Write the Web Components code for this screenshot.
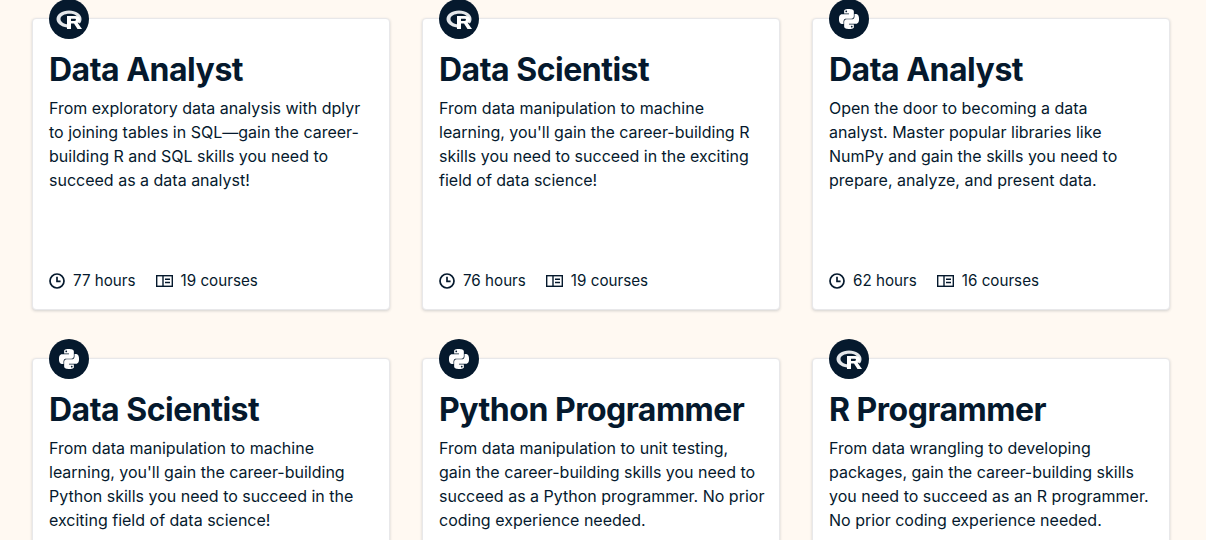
<!DOCTYPE html>
<html lang="en">
<head>
<meta charset="utf-8">
<title>Career tracks</title>
<style>
  html, body {
    margin: 0;
    height: 100%;
    overflow: hidden;
    background-color: #fff;
  }
</style>
</head>
<body>
<track-grid>
  <track-card tech="r" hours="77 hours" courses="19 courses" heading="Data Analyst">From exploratory data analysis with dplyr<br>to joining tables in SQL—gain the career-<br>building R and SQL skills you need to<br>succeed as a data analyst!</track-card>
  <track-card tech="r" hours="76 hours" courses="19 courses" heading="Data Scientist">From data manipulation to machine<br>learning, you'll gain the career-building R<br>skills you need to succeed in the exciting<br>field of data science!</track-card>
  <track-card tech="python" hours="62 hours" courses="16 courses" heading="Data Analyst">Open the door to becoming a data<br>analyst. Master popular libraries like<br>NumPy and gain the skills you need to<br>prepare, analyze, and present data.</track-card>
  <track-card tech="python" hours="" courses="" heading="Data Scientist">From data manipulation to machine<br>learning, you'll gain the career-building<br>Python skills you need to succeed in the<br>exciting field of data science!</track-card>
  <track-card tech="python" hours="" courses="" heading="Python Programmer">From data manipulation to unit testing,<br>gain the career-building skills you need to<br>succeed as a Python programmer. No prior<br>coding experience needed.</track-card>
  <track-card tech="r" hours="" courses="" heading="R Programmer">From data wrangling to developing<br>packages, gain the career-building skills<br>you need to succeed as an R programmer.<br>No prior coding experience needed.</track-card>
</track-grid>

<script>
const PYTHON_ICON = `
  <svg viewBox="0 0 24 24" width="20" height="20" fill="#fff" aria-hidden="true">
    <path d="M14.25.18l.9.2.73.26.59.3.45.32.34.34.25.34.16.33.1.3.04.26.02.2-.01.13V8.5l-.05.63-.13.55-.21.46-.26.38-.3.31-.33.25-.35.19-.35.14-.33.1-.3.07-.26.04-.21.02H8.77l-.69.05-.59.14-.5.22-.41.27-.33.32-.27.35-.2.36-.15.37-.1.35-.07.32-.04.27-.02.21v3.06H3.17l-.21-.03-.28-.07-.32-.12-.35-.18-.36-.26-.36-.36-.35-.46-.32-.59-.28-.73-.21-.88-.14-1.05-.05-1.23.06-1.22.16-1.04.24-.87.32-.71.36-.57.4-.44.42-.33.42-.24.4-.16.36-.1.32-.05.24-.01h.16l.06.01h8.16v-.83H6.18l-.01-2.75-.02-.37.05-.34.11-.31.17-.28.25-.26.31-.23.38-.2.44-.18.51-.15.58-.12.64-.1.71-.06.77-.04.84-.02 1.27.05zm-6.3 1.98l-.23.33-.08.41.08.41.23.34.33.22.41.09.41-.09.33-.22.23-.34.08-.41-.08-.41-.23-.33-.33-.22-.41-.09-.41.09zm13.09 3.95l.28.06.32.12.35.18.36.27.36.35.35.47.32.59.28.73.21.88.14 1.04.05 1.23-.06 1.23-.16 1.04-.24.86-.32.71-.36.57-.4.45-.42.33-.42.24-.4.16-.36.09-.32.05-.24.02-.16-.01h-8.22v.82h5.84l.01 2.76.02.36-.05.34-.11.31-.17.29-.25.25-.31.24-.38.2-.44.17-.51.15-.58.13-.64.09-.71.07-.77.04-.84.01-1.27-.04-1.07-.14-.9-.2-.73-.25-.59-.3-.45-.33-.34-.34-.25-.34-.16-.33-.1-.3-.04-.25-.02-.2.01-.13v-5.34l.05-.64.13-.54.21-.46.26-.38.3-.32.33-.24.35-.2.35-.14.33-.1.3-.06.26-.04.21-.02.13-.01h5.84l.69-.05.59-.14.5-.21.41-.28.33-.32.27-.35.2-.36.15-.36.1-.35.07-.32.04-.28.02-.21V6.07h2.09l.14.01zm-6.47 14.25l-.23.33-.08.41.08.41.23.33.33.23.41.08.41-.08.33-.23.23-.33.08-.41-.08-.41-.23-.33-.33-.23-.41-.08-.41.08z"/>
  </svg>`

const R_ICON = `
  <svg viewBox="0 0 40 40" width="40" height="40" aria-hidden="true">
    <path fill="#e4e7ea" d="M20 11.500C13 11.500 7.500 15.300 7.500 20C7.500 24.200 12 27.800 18 28.400V25.200C14 24.500 11.500 22.500 11.500 20C11.500 17 15.500 14.800 20.500 14.800C25.500 14.800 29 16.800 29 20C29 21 28.600 22 27.800 22.800L30.800 24.600C32 23.300 32.500 21.700 32.500 20C32.500 15.300 27 11.500 20 11.500Z"/>
    <path fill="#fff" fill-rule="evenodd" d="M18 17H26.500C29.500 17 31 18.500 31 20.600C31 22.300 30 23.300 28.600 23.800L33 30H28.500L25 24.500H22V30H18ZM22 19.700V22H25.500C26.500 22 27 21.500 27 20.850C27 20.200 26.500 19.700 25.500 19.700Z"/>
  </svg>`

const gridTemplate = document.createElement('template')
gridTemplate.innerHTML = `
  <style>
    :host {
      display: grid;
      grid-template-columns: repeat(3, 358px);
      align-content: start;
      column-gap: 32px;
      row-gap: 48px;
      box-sizing: border-box;
      height: 540px;
      overflow: hidden;
      padding: 18px 36px 0 32px;
      background-color: #fff9f2;
    }
  </style>
  <slot></slot>
`

customElements.define('track-grid',
  /**
   * The grid that holds the track cards.
   */
  class extends HTMLElement {
    constructor () {
      super()
      this.attachShadow({ mode: 'open' })
        .appendChild(gridTemplate.content.cloneNode(true))
    }
  }
)

const cardTemplate = document.createElement('template')
cardTemplate.innerHTML = `
  <style>
    :host {
      display: flex;
      flex-direction: column;
      position: relative;
      box-sizing: border-box;
      height: 292px;
      padding: 31px 16px 16px;
      background-color: #fff;
      border: 1px solid #e8e8ea;
      border-radius: 4px;
      box-shadow: 0 1px 3px rgba(5, 25, 45, .18);
      color: #05192d;
      font-family: Inter, "Noto Sans", sans-serif;
    }
    .badge {
      position: absolute;
      left: 16px;
      top: -20px;
      width: 40px;
      height: 40px;
      border-radius: 50%;
      background-color: #05192d;
      display: flex;
      align-items: center;
      justify-content: center;
    }
    h2 {
      margin: 0 0 6px;
      font-size: 32px;
      line-height: 40px;
      font-weight: 700;
      letter-spacing: -.5px;
    }
    p {
      margin: 0;
      font-size: 16px;
      line-height: 24px;
      white-space: nowrap;
    }
    track-meta {
      margin-top: auto;
    }
  </style>
  <div class="badge"></div>
  <h2></h2>
  <p><slot></slot></p>
  <track-meta></track-meta>
`

customElements.define('track-card',
  /**
   * One career track: badge, heading, description and the meta row.
   */
  class extends HTMLElement {
    constructor () {
      super()
      this.attachShadow({ mode: 'open' })
        .appendChild(cardTemplate.content.cloneNode(true))
    }

    connectedCallback () {
      const root = this.shadowRoot
      root.querySelector('.badge').innerHTML = this.getAttribute('tech') === 'python' ? PYTHON_ICON : R_ICON
      root.querySelector('h2').textContent = this.getAttribute('heading')
      const meta = root.querySelector('track-meta')
      meta.setAttribute('hours', this.getAttribute('hours'))
      meta.setAttribute('courses', this.getAttribute('courses'))
    }
  }
)

const metaTemplate = document.createElement('template')
metaTemplate.innerHTML = `
  <style>
    :host {
      display: flex;
      align-items: center;
      gap: 20px;
      height: 24px;
      font-size: 15.200px;
      line-height: 24px;
    }
    span {
      display: flex;
      align-items: center;
      gap: 8px;
    }
    svg {
      display: block;
      fill: none;
      stroke: #05192d;
      stroke-width: 1.700;
    }
    b {
      font-weight: 400;
    }
  </style>
  <span>
    <svg viewBox="0 0 16 16" width="16" height="16" aria-hidden="true">
      <circle cx="8" cy="8" r="7"/>
      <path d="M8 3.800V8.400H11.600"/>
    </svg>
    <b id="hours"></b>
  </span>
  <span>
    <svg viewBox="0 0 17 12" width="17" height="12" style="stroke-width:1.400" aria-hidden="true">
      <rect x=".7" y=".7" width="15.600" height="10.600"/>
      <path d="M7 .7V11.300M9 4.200h5M9 7.500h5"/>
    </svg>
    <b id="courses"></b>
  </span>
`

customElements.define('track-meta',
  /**
   * The row with the hours and the number of courses.
   */
  class extends HTMLElement {
    static get observedAttributes () {
      return ['hours', 'courses']
    }

    constructor () {
      super()
      this.attachShadow({ mode: 'open' })
        .appendChild(metaTemplate.content.cloneNode(true))
    }

    attributeChangedCallback (name, oldValue, newValue) {
      this.shadowRoot.querySelector(`#${name}`).textContent = newValue
    }
  }
)
</script>
</body>
</html>
